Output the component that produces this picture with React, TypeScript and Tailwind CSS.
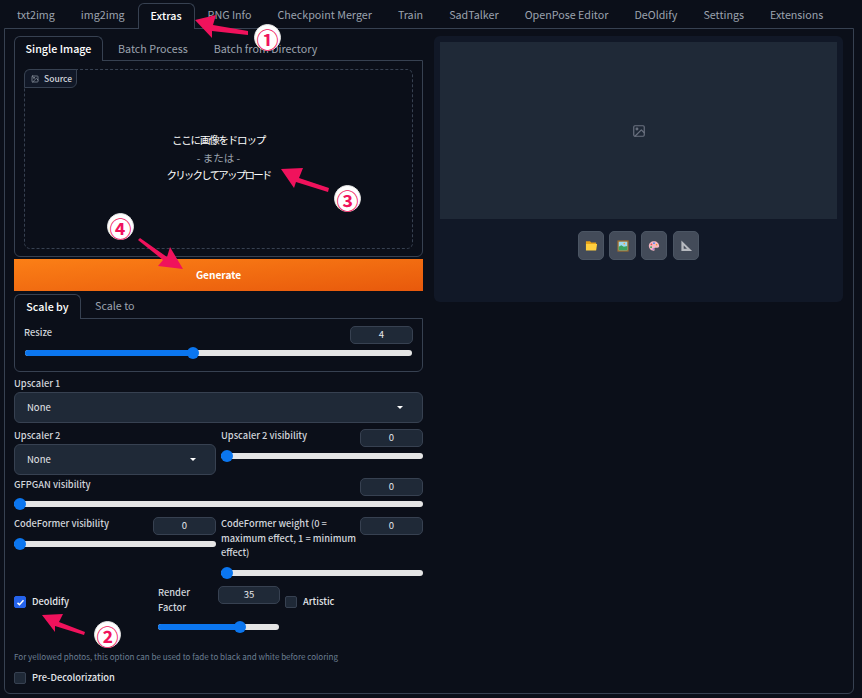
import React from 'react';

const topTabs = ['txt2img', 'img2img', 'Extras', 'PNG Info', 'Checkpoint Merger', 'Train', 'SadTalker', 'OpenPose Editor', 'DeOldify', 'Settings', 'Extensions'];

const ImageIcon = ({ className }: { className: string }) => (
    <svg viewBox="0 0 24 24" fill="none" stroke="currentColor" strokeWidth="2" strokeLinecap="round" strokeLinejoin="round" className={className}>
        <rect x="3" y="3" width="18" height="18" rx="2" />
        <circle cx="8.5" cy="8.5" r="1.5" />
        <polyline points="21 15 16 10 5 21" />
    </svg>
);

const Slider = ({ pct, className = '' }: { pct: number; className?: string }) => (
    <div className={`relative h-[6px] rounded-full bg-[#e5e5e5] ${className}`}>
        <div className="h-full rounded-full bg-[#0b76ef]" style={{ width: `${pct}%` }} />
        <div className="absolute top-[-3px] w-3 h-3 -ml-[6px] rounded-full bg-[#0b76ef]" style={{ left: `${pct}%` }} />
    </div>
);

const NumBox = ({ value, className = '' }: { value: string; className?: string }) => (
    <div className={`h-[18px] rounded-[5px] border border-[#374151] bg-[#1f2937] flex items-center justify-center text-[9.5px] leading-none text-[#e5e7eb] ${className}`}>
        {value}
    </div>
);

const Check = ({ checked = false }: { checked?: boolean }) => (
    <div className={`w-3 h-3 rounded-[2px] border flex items-center justify-center shrink-0 ${checked ? 'bg-[#2563eb] border-[#2563eb]' : 'bg-[#1f2937] border-[#374151]'}`}>
        {checked && (
            <svg viewBox="0 0 12 12" className="w-[9px] h-[9px]" fill="none" stroke="white" strokeWidth="2">
                <path d="M2 6.5l2.6 2.4L10 3" />
            </svg>
        )}
    </div>
);

const Select = ({ className = '' }: { className?: string }) => (
    <div className={`rounded-[6px] border border-[#374151] bg-[#1f2937] flex items-center justify-between pl-[12px] pr-[19px] text-[9.5px] text-[#e5e7eb] ${className}`}>
        <span>None</span>
        <span className="w-0 h-0 border-x-[3px] border-x-transparent border-t-[3px] border-t-white" />
    </div>
);

const Badge = ({ char, className }: { char: string; className: string }) => (
    <div className={`absolute w-[27px] h-[27px] rounded-full bg-white border border-[#e5e5e5] flex items-center justify-center text-[#f0125c] text-[22px] leading-none font-bold ${className}`}>
        {char}
    </div>
);

const Label = ({ children, className = '' }: { children: React.ReactNode; className?: string }) => (
    <div className={`text-[9.3px] leading-[14px] font-medium text-[#d1d5db] ${className}`}>{children}</div>
);

function IconButton({ children, className = '' }: { children: React.ReactNode; className?: string }) {
    return (
        <div className={`h-[29px] rounded-[5px] border border-[#4b5563] bg-[#434b59] flex items-center justify-center ${className}`}>
            {children}
        </div>
    );
}

export default function App() {
    return (
        <div className="relative w-[862px] h-[698px] overflow-hidden bg-[#0b0f19] text-[#9ca3af] font-['Noto_Sans_CJK_JP',sans-serif]">
            {/* top tabs */}
            <div className="flex h-[28px] pl-1 pt-[3px]">
                {topTabs.map((t) => (
                    <div
                        key={t}
                        className={`flex items-center whitespace-nowrap text-[10.72px] leading-none pb-[1px] ${t === 'Extras' ? 'relative z-10 h-[26px] px-[12px] rounded-t-[6px] border border-b-0 border-[#374151] bg-[#0b0f19] text-white font-medium' : 'px-[13px] text-[#9ca3af]'}`}
                    >
                        {t}
                    </div>
                ))}
            </div>

            <div className="mx-1 w-[850px] h-[666px] rounded-b-[6px] border border-[#374151] px-[9px] pt-[7px] flex gap-[11px]">
                {/* LEFT COLUMN */}
                <div className="w-[409px] shrink-0">
                    <div className="flex h-[25px] text-[10.72px] leading-none">
                        <div className="relative z-10 w-[89px] h-[25px] pt-px rounded-t-[6px] border border-b-0 border-[#374151] bg-[#0b0f19] text-white font-medium flex items-center justify-center">Single Image</div>
                        <div className="ml-[2px] pt-px px-[13px] flex items-center">Batch Process</div>
                        <div className="pt-px px-[13px] flex items-center">Batch from Directory</div>
                    </div>
                    <div className="-mt-px h-[197px] rounded-b-[6px] border border-[#374151] px-[9px] pt-[8px]">
                        <div className="h-[180px] rounded-[6px] border border-dashed border-[#374151] flex flex-col">
                            <div className="w-[53px] h-[19px] -mt-px -ml-px rounded-br-[6px] rounded-tl-[6px] border border-[#374151] bg-[#111827] flex items-center gap-[5px] pl-[6px] text-[8.5px] font-medium text-[#d1d5db]">
                                <ImageIcon className="w-2 h-2 text-[#9ca3af]" />
                                <span>Source</span>
                            </div>
                            <div className="mt-[43px] flex flex-col items-center text-[10.5px] leading-[17.5px] text-white">
                                <div className="tracking-[-1.2px]">ここに画像をドロップ</div>
                                <div className="text-[#9ca3af]">- または -</div>
                                <div className="tracking-[-1.8px]">クリックしてアップロード</div>
                            </div>
                        </div>
                    </div>

                    <div className="mt-[2px] h-[32px] bg-gradient-to-br from-[#fb7f16] to-[#e8590c] flex items-center justify-center text-white text-[10.1px] font-bold">Generate</div>

                    <div className="mt-[3px] flex h-[25px] text-[10.72px] leading-none">
                        <div className="relative z-10 w-[67px] h-[25px] rounded-t-[6px] border border-b-0 border-[#374151] bg-[#0b0f19] text-white font-medium flex items-center justify-center">Scale by</div>
                        <div className="px-[14px] flex items-center">Scale to</div>
                    </div>
                    <div className="-mt-px h-[54px] rounded-b-[6px] border border-[#374151] px-[10px] pt-[7px]">
                        <div className="flex justify-between">
                            <Label className="-ml-px -mt-px">Resize</Label>
                            <NumBox value="4" className="w-[63px] -mr-px" />
                        </div>
                        <Slider pct={43.5} className="mt-[6px]" />
                    </div>

                    <Label className="mt-[4px]">Upscaler 1</Label>
                    <Select className="mt-[2px] h-[31px]" />

                    <div className="mt-[6px] flex gap-[5px]">
                        <div className="w-[202px] shrink-0">
                            <Label className="-mt-px">Upscaler 2</Label>
                            <Select className="mt-[2px] h-[31px]" />
                        </div>
                        <div className="flex-1 min-w-0">
                            <div className="flex justify-between">
                                <Label className="-mt-px">Upscaler 2 visibility</Label>
                                <NumBox value="0" className="w-[63px]" />
                            </div>
                            <Slider pct={3} className="mt-[6px]" />
                        </div>
                    </div>

                    <div className="mt-[3px] flex justify-between">
                        <Label className="-mt-px">GFPGAN visibility</Label>
                        <NumBox value="0" className="w-[63px]" />
                    </div>
                    <Slider pct={1.5} className="mt-[5px]" />

                    <div className="mt-[10px] flex gap-[5px]">
                        <div className="w-[202px] shrink-0">
                            <div className="flex justify-between">
                                <Label className="-mt-px">CodeFormer visibility</Label>
                                <NumBox value="0" className="w-[63px]" />
                            </div>
                            <Slider pct={3} className="mt-[6px]" />
                        </div>
                        <div className="flex-1 min-w-0">
                            <div className="flex justify-between">
                                <Label className="-mt-px w-[136px] !leading-[14.5px]">CodeFormer weight (0 = maximum effect, 1 = minimum effect)</Label>
                                <NumBox value="0" className="w-[63px] shrink-0" />
                            </div>
                            <Slider pct={3} className="mt-[10.5px]" />
                        </div>
                    </div>

                    <div className="mt-[10px] flex">
                        <div className="w-[144px] shrink-0 flex items-start gap-[6px] pt-[10px] text-[9.3px] font-medium leading-[11px] text-[#e5e7eb]">
                            <Check checked />
                            <span>Deoldify</span>
                        </div>
                        <div className="w-[122px] shrink-0">
                            <div className="flex justify-between">
                                <Label className="w-[50px] -mt-px !leading-[15px]">Render Factor</Label>
                                <NumBox value="35" className="w-[62px]" />
                            </div>
                            <Slider pct={67.5} className="mt-[9px] mr-px" />
                        </div>
                        <div className="ml-[5px] flex items-start gap-[6px] pt-[10px] text-[9.3px] font-medium leading-[11px] text-[#e5e7eb]">
                            <Check />
                            <span>Artistic</span>
                        </div>
                    </div>

                    <div className="mt-[21px] text-[8.05px] leading-[12px] text-[#6b7f93]">For yellowed photos, this option can be used to fade to black and white before coloring</div>
                    <div className="mt-[9px] flex items-start gap-[6px] text-[9.3px] font-medium leading-[11px] text-[#e5e7eb]">
                        <Check />
                        <span>Pre-Decolorization</span>
                    </div>
                </div>

                {/* RIGHT COLUMN */}
                <div className="w-[409px] h-[266px] shrink-0 rounded-[6px] bg-[#111827] px-[6px] pt-[6px]">
                    <div className="h-[177px] bg-[#1f2937] flex items-center justify-center">
                        <ImageIcon className="w-[14px] h-[14px] text-[#6b7280]" />
                    </div>
                    <div className="mt-3 flex justify-center gap-[5px]">
                        <IconButton className="w-[26px]">
                            <svg viewBox="0 0 14 14" className="w-[13px] h-[13px]">
                                <path d="M1 2.5h4.5l1 1.2H12v2H1z" fill="#e8a317" />
                                <path d="M1 12.5V5.5h12l-1 7z" fill="#ffcf3f" />
                            </svg>
                        </IconButton>
                        <IconButton className="w-[27px]">
                            <svg viewBox="0 0 14 14" className="w-3 h-3">
                                <rect x="0.5" y="0.5" width="13" height="13" fill="#a5702c" />
                                <rect x="2" y="2" width="10" height="10" fill="#9ed8ee" />
                                <circle cx="8.5" cy="4.2" r="1" fill="#f6a23a" />
                                <path d="M2 8l3-2 3 2 4-1v5H2z" fill="#3aa45f" />
                            </svg>
                        </IconButton>
                        <IconButton className="w-[26px]">
                            <svg viewBox="0 0 14 14" className="w-3 h-3">
                                <path d="M7 1.5C3.5 1.5 1 4 1 7s2.5 5.5 5.5 5.5c1.3 0 1.4-1 1-1.8-.4-.9.2-1.7 1.2-1.7H11c1.2 0 2-.8 2-2 0-3-2.7-5.5-6-5.5z" fill="#f4b6c2" />
                                <circle cx="4" cy="5" r="1" fill="#e5484d" />
                                <circle cx="7" cy="3.7" r="1" fill="#3b82f6" />
                                <circle cx="3.6" cy="8.4" r="1" fill="#22a35a" />
                                <circle cx="6.2" cy="10.5" r="0.9" fill="#8b5cf6" />
                                <circle cx="10" cy="5.6" r="0.9" fill="#f59e0b" />
                            </svg>
                        </IconButton>
                        <IconButton className="w-[26px] ml-px">
                            <svg viewBox="0 0 14 14" className="w-[13px] h-[13px]">
                                <path fillRule="evenodd" d="M1.5 1.5l11.5 11.5H1.5zM4 7v3.5h3.5z" fill="#b6b9bf" />
                            </svg>
                        </IconButton>
                    </div>
                </div>
            </div>

            {/* annotation arrows over the screenshot */}
            <svg className="absolute inset-0 w-full h-full pointer-events-none" viewBox="0 0 862 698">
                <g fill="#f0125c">
                    <polygon points="195,20 216,15 213,25 248,31 248,35 212,31 212,38" />
                    <polygon points="281,169 303,168 299,178 329,188 328,192 296,182 294,188" />
                    <polygon points="183,269 170,247 167,257 140,238 138,240 163,260 158,266" />
                    <polygon points="42,615 63,614 59,622 85,632 84,635 55,626 55,632" />
                </g>
            </svg>
            <Badge char="①" className="left-[254px] top-[24px]" />
            <Badge char="③" className="left-[334px] top-[185px]" />
            <Badge char="④" className="left-[107px] top-[213px]" />
            <Badge char="②" className="left-[94px] top-[621px]" />
        </div>
    );
}
